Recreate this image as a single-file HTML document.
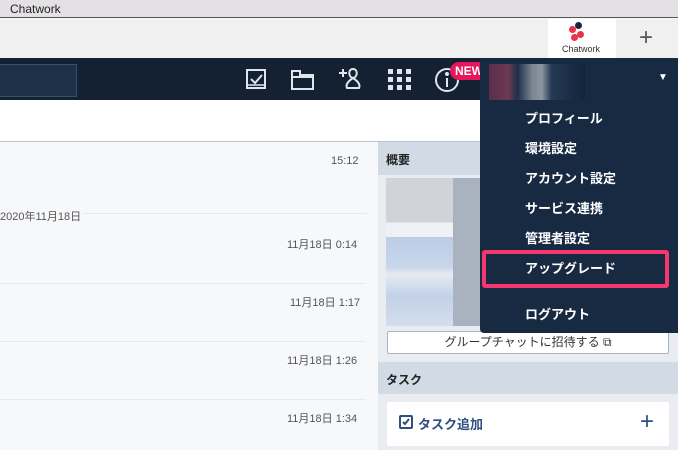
<!DOCTYPE html><html><head><meta charset="utf-8"><style>
*{margin:0;padding:0;box-sizing:border-box}
body{width:678px;height:450px;overflow:hidden;position:relative;font-family:"Liberation Sans","Noto Sans CJK JP",sans-serif;background:#f7f8fa}
.a{position:absolute}
.t{font-size:11px;color:#555}
.m{font-size:13px;color:#fff;font-weight:bold;left:525px}
</style></head><body>
<div class="a" style="left:0;top:0;width:678px;height:18px;background:#e3e1e3;border-bottom:1px solid #555"></div>
<div class="a" style="left:10px;top:2px;font-size:12px;color:#222">Chatwork</div>
<div class="a" style="left:0;top:19px;width:678px;height:39px;background:#f0f0f0"></div>
<div class="a" style="left:548px;top:19px;width:68px;height:39px;background:#fff"></div>
<div class="a" style="left:575px;top:22px;width:7px;height:7px;border-radius:50%;background:#1b2533"></div>
<div class="a" style="left:569px;top:26px;width:7px;height:7px;border-radius:50%;background:#e8334a"></div>
<div class="a" style="left:577px;top:31px;width:7px;height:7px;border-radius:50%;background:#e8334a"></div>
<div class="a" style="left:571px;top:34px;width:7px;height:7px;border-radius:50%;background:#e8334a"></div>
<div class="a" style="left:562px;top:44px;font-size:9px;color:#333">Chatwork</div>
<div class="a" style="left:639px;top:26px;font-size:24px;color:#555;font-weight:300;line-height:24px">+</div>
<div class="a" style="left:0;top:58px;width:678px;height:42px;background:#142133"></div>
<div class="a" style="left:0;top:64px;width:77px;height:33px;background:#1d3047;border:1px solid #34506f;border-left:none"></div>
<svg class="a" style="left:245px;top:68px" width="24" height="24" viewBox="0 0 24 24" fill="none" stroke="#dfe6ee" stroke-width="2"><rect x="2" y="2" width="18" height="18"/><path d="M6 11l4 4 7-8"/><path d="M2 17h18" stroke-width="1.5"/></svg>
<svg class="a" style="left:290px;top:68px" width="26" height="24" viewBox="0 0 26 24" fill="none" stroke="#dfe6ee" stroke-width="2"><path d="M2 3h8v4h13v14H2z"/><path d="M2 9h21"/></svg>
<svg class="a" style="left:338px;top:66px" width="26" height="28" viewBox="0 0 26 28" fill="none" stroke="#dfe6ee" stroke-width="2"><path d="M1 7h8M5 3v8"/><path d="M15 3c-5 0-5 8 0 9c5-1 5-9 0-9z"/><path d="M15 12c-3 2-8 6-6 10h12c2-4-3-8-6-10"/></svg>
<svg class="a" style="left:388px;top:69px" width="24" height="22"><g fill="#dfe6ee"><rect x="0" y="0" width="5" height="5"/><rect x="9" y="0" width="5" height="5"/><rect x="18" y="0" width="5" height="5"/><rect x="0" y="8" width="5" height="5"/><rect x="9" y="8" width="5" height="5"/><rect x="18" y="8" width="5" height="5"/><rect x="0" y="16" width="5" height="5"/><rect x="9" y="16" width="5" height="5"/><rect x="18" y="16" width="5" height="5"/></g></svg>
<svg class="a" style="left:434px;top:67px" width="26" height="26" viewBox="0 0 26 26" fill="none" stroke="#dfe6ee" stroke-width="2"><circle cx="13" cy="13" r="11"/><path d="M13 11v9"/><circle cx="13" cy="7" r="1" fill="#dfe6ee"/></svg>
<div class="a" style="left:450px;top:62px;width:40px;height:18px;background:#e6175c;border-radius:9px;color:#fff;font-size:12px;font-weight:bold;padding-left:5px;line-height:18px">NEW</div>
<div class="a" style="left:0;top:100px;width:678px;height:42px;background:#fff;border-bottom:1px solid #b9c3cf"></div>
<div class="a" style="left:370px;top:142px;width:8px;height:308px;background:#f7f8fa"></div>
<div class="a t" style="left:331px;top:155px">15:12</div>
<div class="a t" style="left:0;top:208px">2020年11月18日</div>
<div class="a" style="left:82px;top:213px;width:285px;height:1px;background:#e6e9ed"></div>
<div class="a t" style="left:287px;top:236px">11月18日 0:14</div>
<div class="a" style="left:0;top:283px;width:366px;height:1px;background:#e6e9ed"></div>
<div class="a t" style="left:290px;top:294px">11月18日 1:17</div>
<div class="a" style="left:0;top:341px;width:366px;height:1px;background:#e6e9ed"></div>
<div class="a t" style="left:287px;top:352px">11月18日 1:26</div>
<div class="a" style="left:0;top:399px;width:366px;height:1px;background:#e6e9ed"></div>
<div class="a t" style="left:287px;top:410px">11月18日 1:34</div>
<div class="a" style="left:378px;top:142px;width:300px;height:308px;background:#e9edf2"></div>
<div class="a" style="left:378px;top:142px;width:300px;height:33px;background:#d2dbe5"></div>
<div class="a" style="left:386px;top:151px;font-size:12px;font-weight:bold;color:#222">概要</div>
<div class="a" style="left:386px;top:178px;width:95px;height:148px;background:linear-gradient(#d0d3d8 0,#d0d3d8 30%,#eef1f6 30%,#eef1f6 40%,#bccde6 40%,#c8d6ea 60%,#e6eaf0 65%,#c3d2e8 80%,#d3dded 100%)"></div>
<div class="a" style="left:453px;top:178px;width:28px;height:148px;background:#a9b2bf"></div>
<div class="a" style="left:387px;top:331px;width:282px;height:23px;background:#fff;border:1px solid #a9b4c2;border-radius:2px;font-size:12px;color:#333;text-align:center;line-height:21px">グループチャットに招待する ⧉</div>
<div class="a" style="left:378px;top:362px;width:300px;height:32px;background:#d2dbe5"></div>
<div class="a" style="left:386px;top:371px;font-size:12px;font-weight:bold;color:#222">タスク</div>
<div class="a" style="left:387px;top:402px;width:282px;height:44px;background:#fff;border-radius:2px"></div>
<svg class="a" style="left:399px;top:415px" width="14" height="14" viewBox="0 0 14 14" fill="none" stroke="#2e4f80" stroke-width="2"><rect x="1" y="1" width="12" height="12" rx="1"/><path d="M4 7l2 2 4-5"/></svg>
<div class="a" style="left:418px;top:414px;font-size:13px;font-weight:bold;color:#2e4f80">タスク追加</div>
<div class="a" style="left:640px;top:408px;font-size:24px;color:#2e4f80;line-height:28px">+</div>
<div class="a" style="left:480px;top:58px;width:198px;height:275px;background:#172a42;border-radius:0 0 0 4px"></div>
<div class="a" style="left:489px;top:64px;width:96px;height:36px;background:linear-gradient(90deg,#5a2f48 0,#6b3a52 20%,#1e3049 30%,#7b8593 45%,#8c95a1 55%,#263a55 65%,#12233a 100%)"></div>
<div class="a" style="left:658px;top:72px;color:#fff;font-size:10px">▼</div>
<div class="a m" style="top:108px">プロフィール</div>
<div class="a m" style="top:138px">環境設定</div>
<div class="a m" style="top:168px">アカウント設定</div>
<div class="a m" style="top:198px">サービス連携</div>
<div class="a m" style="top:228px">管理者設定</div>
<div class="a" style="left:482px;top:250px;width:187px;height:38px;border:4px solid #f4376e;border-radius:3px"></div>
<div class="a m" style="top:258px">アップグレード</div>
<div class="a m" style="top:304px">ログアウト</div>
</body></html>
